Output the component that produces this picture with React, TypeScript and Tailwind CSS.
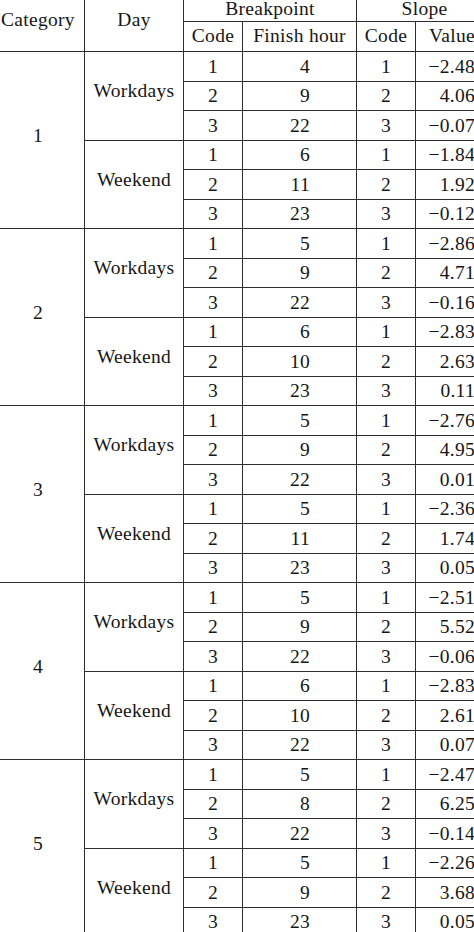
import React from 'react';

type Row = [number, string];
type Group = { day: string; rows: Row[] };

const data: { cat: string; groups: Group[] }[] = [
  {
    cat: '1',
    groups: [
      { day: 'Workdays', rows: [[4, '−2.48'], [9, '4.06'], [22, '−0.07']] },
      { day: 'Weekend', rows: [[6, '−1.84'], [11, '1.92'], [23, '−0.12']] },
    ],
  },
  {
    cat: '2',
    groups: [
      { day: 'Workdays', rows: [[5, '−2.86'], [9, '4.71'], [22, '−0.16']] },
      { day: 'Weekend', rows: [[6, '−2.83'], [10, '2.63'], [23, '0.11']] },
    ],
  },
  {
    cat: '3',
    groups: [
      { day: 'Workdays', rows: [[5, '−2.76'], [9, '4.95'], [22, '0.01']] },
      { day: 'Weekend', rows: [[5, '−2.36'], [11, '1.74'], [23, '0.05']] },
    ],
  },
  {
    cat: '4',
    groups: [
      { day: 'Workdays', rows: [[5, '−2.51'], [9, '5.52'], [22, '−0.06']] },
      { day: 'Weekend', rows: [[6, '−2.83'], [10, '2.61'], [22, '0.07']] },
    ],
  },
  {
    cat: '5',
    groups: [
      { day: 'Workdays', rows: [[5, '−2.47'], [8, '6.25'], [22, '−0.14']] },
      { day: 'Weekend', rows: [[5, '−2.26'], [9, '3.68'], [23, '0.05']] },
    ],
  },
];

const DataRow: React.FC<{ code: number; hour: number; value: string }> = ({ code, hour, value }) => (
  <div className="flex h-[29.5px] border-b border-[#2e2e2e]">
    <div className="w-[59px] border-r border-[#2e2e2e] flex items-center justify-center">{code}</div>
    <div className="w-[114px] border-r border-[#2e2e2e] flex items-center justify-center">
      <span className="inline-block w-[21px] text-right">{hour}</span>
    </div>
    <div className="w-[59px] border-r border-[#2e2e2e] flex items-center justify-center">{code}</div>
    <div className="w-[70px] flex items-center justify-end pr-[11px]">{value}</div>
  </div>
);

export default function App() {
  return (
    <div
      className="w-[474px] h-[932px] overflow-hidden bg-white text-[#161616] text-[19.5px] leading-none tracking-[0.3px]"
      style={{ fontFamily: '"Liberation Serif", "Times New Roman", serif' }}
    >
      <div className="-mt-[6px] -ml-[8px] w-[494px]">
        {/* header */}
        <div className="flex h-[58px] border-b border-[#2e2e2e]">
          <div className="w-[93px] border-r border-[#2e2e2e] flex items-center justify-center">
            <span className="-translate-y-[3px]">Category</span>
          </div>
          <div className="w-[99px] border-r border-[#2e2e2e] flex items-center justify-center">
            <span className="-translate-y-[3px]">Day</span>
          </div>
          <div className="flex flex-col">
            <div className="flex h-[28.5px] border-b border-[#2e2e2e]">
              <div className="w-[173px] border-r border-[#2e2e2e] flex items-center justify-center">
                <span className="translate-y-[0.5px]">Breakpoint</span>
              </div>
              <div className="w-[129px] flex items-center justify-center pl-[6px]">
                <span className="translate-y-[0.5px]">Slope</span>
              </div>
            </div>
            <div className="flex h-[29.5px]">
              <div className="w-[59px] border-r border-[#2e2e2e] flex items-center justify-center">
                <span className="-translate-y-[1.5px]">Code</span>
              </div>
              <div className="w-[114px] border-r border-[#2e2e2e] flex items-center justify-center">
                <span className="-translate-y-[1.5px]">Finish hour</span>
              </div>
              <div className="w-[59px] border-r border-[#2e2e2e] flex items-center justify-center">
                <span className="-translate-y-[1.5px]">Code</span>
              </div>
              <div className="w-[70px] flex items-center justify-end pr-[11px]">
                <span className="-translate-y-[1.5px]">Value</span>
              </div>
            </div>
          </div>
        </div>

        {/* body */}
        {data.map((c) => (
          <div key={c.cat} className="flex">
            <div className="w-[93px] border-r border-b border-[#2e2e2e] flex items-center justify-center">
              <span className="-translate-y-[4px]">{c.cat}</span>
            </div>
            <div className="flex flex-col">
              {c.groups.map((g) => (
                <div key={g.day} className="flex">
                  <div className="w-[99px] border-r border-b border-[#2e2e2e] flex items-center justify-center">
                    <span className="-translate-y-[5px]">{g.day}</span>
                  </div>
                  <div className="flex flex-col">
                    {g.rows.map((r, i) => (
                      <DataRow key={i} code={i + 1} hour={r[0]} value={r[1]} />
                    ))}
                  </div>
                </div>
              ))}
            </div>
          </div>
        ))}
      </div>
    </div>
  );
}
